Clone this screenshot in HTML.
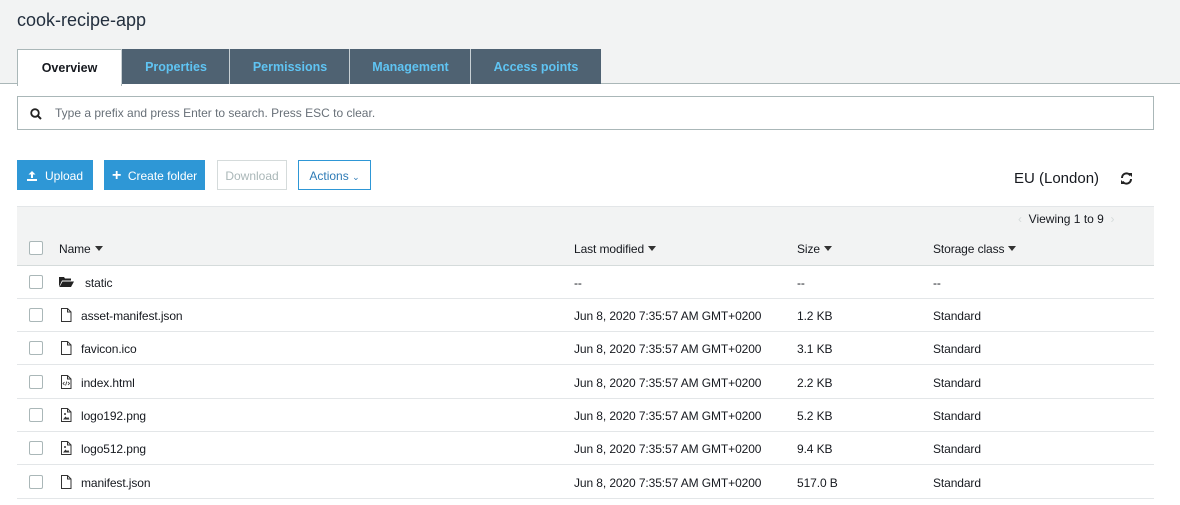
<!DOCTYPE html>
<html><head><meta charset="utf-8"><style>
*{box-sizing:border-box;margin:0;padding:0}
body{width:1180px;height:505px;overflow:hidden;background:#fff;font-family:"Liberation Sans",Arial,sans-serif;color:#16191f;position:relative;font-size:12px}
.hdr{position:absolute;left:0;top:0;width:1180px;height:84px;background:#f2f3f3;border-bottom:1px solid #aab7b8}
.title{position:absolute;left:17px;top:10px;font-size:18px;color:#232f3e}
.tab{position:absolute;top:49px;height:35px;background:#4f6272;color:#5fc4f3;font-weight:bold;font-size:12.5px;text-align:center;line-height:36px;border-left:1px solid #c8d0d4}
.tab.on{background:#fff;color:#16191f;border:1px solid #aab7b8;border-bottom:none;height:37px}
.search{position:absolute;left:17px;top:96px;width:1137px;height:34px;border:1px solid #aab7b8;color:#687078;font-size:12px;line-height:32px;padding-left:37px}
.btn{position:absolute;top:160px;height:30px;line-height:30px;font-size:12px;text-align:center}
.blue{background:#2e97d6;color:#fff;border:1px solid #2e97d6}
.row{position:absolute;left:17px;width:1137px;border-bottom:1px solid #e3e6e8;font-size:12px;letter-spacing:-0.1px}
.cb{position:absolute;left:12px;width:14px;height:14px;border:1px solid #aab7b8;border-radius:2px;background:#fff}
.c{position:absolute}
.tri{display:inline-block;border-left:4px solid transparent;border-right:4px solid transparent;border-top:5px solid #333;margin-left:4px;vertical-align:2px}
</style></head><body>
<div class="hdr"></div>
<div class="title">cook-recipe-app</div>
<div class="tab on" style="left:17px;width:105px">Overview</div>
<div class="tab" style="left:121px;width:109px">Properties</div>
<div class="tab" style="left:229px;width:121px">Permissions</div>
<div class="tab" style="left:349px;width:122px">Management</div>
<div class="tab" style="left:470px;width:131px">Access points</div>
<div class="search">Type a prefix and press Enter to search. Press ESC to clear.
<svg style="position:absolute;left:12px;top:11px" width="12" height="12" viewBox="0 0 12 12"><circle cx="5" cy="5" r="3.8" fill="none" stroke="#222" stroke-width="1.8"/><path d="M7.8 7.8L11 11" stroke="#222" stroke-width="2"/></svg></div>
<div class="btn blue" style="left:17px;width:76px;padding-left:18px">Upload<svg style="position:absolute;left:8px;top:9px" width="12" height="12" viewBox="0 0 12 12"><path d="M6 1L2.5 4.5H5V8H7V4.5H9.5Z" fill="#fff"/><rect x="1" y="9" width="10" height="2" fill="#fff"/></svg></div>
<div class="btn blue" style="left:104px;width:101px;padding-left:16px"><span style="position:absolute;left:7px;top:0;font-weight:bold;font-size:16px">+</span>Create folder</div>
<div class="btn" style="left:217px;width:70px;border:1px solid #d5dbdb;color:#aab7b8">Download</div>
<div class="btn" style="left:298px;width:73px;border:1px solid #2e97d6;color:#2e7bb6">Actions <span style="font-size:9px">&#8964;</span></div>
<div style="position:absolute;left:1014px;top:170px;font-size:15px;color:#16191f">EU (London)</div>
<svg style="position:absolute;left:1120px;top:172px" width="13" height="13" viewBox="0 0 13 13"><path d="M2 6A4.5 4.5 0 0 1 10.3 3.5" fill="none" stroke="#222" stroke-width="2"/><path d="M8 1h4v4z" fill="#222"/><path d="M11 7A4.5 4.5 0 0 1 2.7 9.5" fill="none" stroke="#222" stroke-width="2"/><path d="M5 12H1V8z" fill="#222"/></svg>
<div style="position:absolute;left:17px;top:206px;width:1137px;height:26px;background:#f2f3f3;border-top:1px solid #e3e6e8"></div>
<div style="position:absolute;left:1018px;top:212px;font-size:12px;color:#16191f"><span style="color:#d5dbdb">‹</span>&nbsp; Viewing 1 to 9 &nbsp;<span style="color:#d5dbdb">›</span></div>
<div class="row" style="top:232px;height:34px;background:#f2f3f3;border-bottom:1px solid #d5dbdb">
<div class="cb" style="top:9px"></div>
<div class="c" style="left:42px;top:10px">Name<span class="tri"></span></div>
<div class="c" style="left:557px;top:10px">Last modified<span class="tri"></span></div>
<div class="c" style="left:780px;top:10px">Size<span class="tri"></span></div>
<div class="c" style="left:916px;top:10px">Storage class<span class="tri"></span></div>
</div>
<div class="row" style="top:266px;height:33px">
<div class="cb" style="top:9px"></div>
<svg class="c" style="left:42px;top:10px" width="15" height="12" viewBox="0 0 15 12"><path d="M0 1h5l1 1.5h6v2H3L0 11Z" fill="#222"/><path d="M3.5 5.5H15L12 11H0.5Z" fill="#222"/></svg>
<div class="c" style="left:68px;top:10px">static</div>
<div class="c" style="left:557px;top:10px">--</div><div class="c" style="left:780px;top:10px">--</div><div class="c" style="left:916px;top:10px">--</div>
</div>
<div id="rows"></div>
<script>
var d=[["asset-manifest.json","1.2 KB","f"],["favicon.ico","3.1 KB","f"],["index.html","2.2 KB","h"],["logo192.png","5.2 KB","i"],["logo512.png","9.4 KB","i"],["manifest.json","517.0 B","f"]];
var h="";d.forEach(function(r,i){var t=299+i*33.3;
var ic='<path d="M1.5 0.5h6l3.5 3.5v9.5h-9.5z" fill="none" stroke="#333"/><path d="M7.5 0.5v3.5h3.5" fill="none" stroke="#333"/>';
if(r[2]=="h")ic+='<path d="M4.5 7l-1.5 1.5 1.5 1.5M8 7l1.5 1.5L8 10M6.8 6.5l-1.2 4" fill="none" stroke="#333" stroke-width=".8"/>';
if(r[2]=="i")ic+='<path d="M3 11.5l2.5-3 1.5 1.5 1.2-1 1.3 2.5z" fill="#333"/><circle cx="5" cy="6" r="1" fill="#333"/>';
h+='<div class="row" style="top:'+t+'px;height:33px"><div class="cb" style="top:9px"></div><svg class="c" style="left:43px;top:9px" width="13" height="15" viewBox="0 0 13 15">'+ic+'</svg><div class="c" style="left:64px;top:10px">'+r[0]+'</div><div class="c" style="left:557px;top:10px">Jun 8, 2020 7:35:57 AM GMT+0200</div><div class="c" style="left:780px;top:10px">'+r[1]+'</div><div class="c" style="left:916px;top:10px">Standard</div></div>';});
document.getElementById("rows").outerHTML=h;
</script>
</body></html>
